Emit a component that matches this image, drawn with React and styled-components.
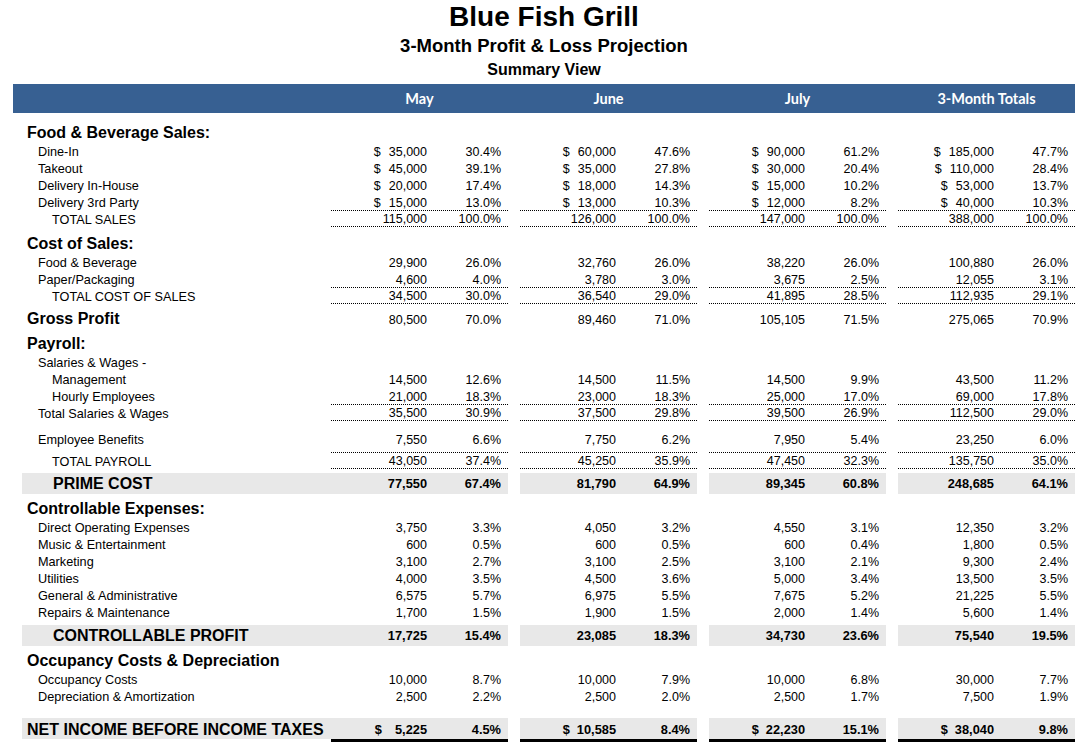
import React from "react";
import styled, { createGlobalStyle, css } from "styled-components";

const GlobalStyle = createGlobalStyle`
  html, body {
    margin: 0;
    padding: 0;
    background: #fff;
  }
  body {
    font-family: "Liberation Sans", Arial, sans-serif;
    color: #000;
  }
`;

const BAND = "#e8e8e8";

const Page = styled.div`
  width: 1062px;
  margin-left: 13px;
`;

const Title = styled.h1`
  margin: 0;
  padding-top: 1px;
  font-size: 28px;
  line-height: 32px;
  font-weight: 700;
  text-align: center;
`;

const Subtitle = styled.h2`
  margin: 2px 0 0;
  font-size: 18.5px;
  line-height: 22px;
  font-weight: 700;
  text-align: center;
`;

const ViewName = styled.div`
  margin-top: 3px;
  font-size: 16px;
  line-height: 19px;
  font-weight: 700;
  text-align: center;
`;

const HeaderBar = styled.div`
  margin-top: 5px;
  height: 29px;
  display: flex;
  align-items: center;
  padding-left: 9px;
  background: #376092;
  color: #fff;
  font-family: Lato, "Liberation Sans", sans-serif;
  font-weight: 700;
  font-size: 14.5px;
`;

const HeaderSpacer = styled.div`
  width: 309px;
  flex: none;
`;

const HeaderCell = styled.div`
  width: 177px;
  flex: none;
  margin-left: ${(p) => (p.$first ? 0 : 12)}px;
  text-align: center;
`;

const Row = styled.div`
  display: flex;
  align-items: flex-start;
  padding-left: 9px;
  margin-top: ${(p) => p.$mt || 0}px;
`;

const bold = (k) => k === "head" || k === "band" || k === "net";
const banded = (k) => k === "band" || k === "net";

const Label = styled.div`
  width: 309px;
  flex: none;
  box-sizing: border-box;
  height: ${(p) => p.$h}px;
  display: flex;
  align-items: flex-end;
  white-space: nowrap;
  padding-left: ${(p) => p.$indent}px;
  background: ${(p) => (banded(p.$kind) ? BAND : "transparent")};
  ${(p) =>
    bold(p.$kind)
      ? css`
          font-size: 16px;
          line-height: 18px;
          font-weight: 700;
          padding-bottom: ${p.$kind === "band" ? 1 : p.$kind === "net" ? 0.5 : 0}px;
        `
      : css`
          font-size: 12.7px;
          line-height: 14px;
          padding-bottom: 0.5px;
        `}
`;

const Group = styled.div`
  width: 177px;
  flex: none;
  box-sizing: border-box;
  height: ${(p) => (p.$kind === "net" ? p.$h + 3 : p.$h)}px;
  margin-left: ${(p) => (p.$first ? 0 : 12)}px;
  padding-right: 7px;
  display: flex;
  align-items: flex-end;
  font-size: ${(p) => (banded(p.$kind) ? 12.8 : 12.5)}px;
  line-height: 14px;
  font-weight: ${(p) => (banded(p.$kind) ? 700 : 400)};
  background: ${(p) => (banded(p.$kind) ? BAND : "transparent")};
  padding-bottom: ${(p) =>
    p.$kind === "band" ? 3 : p.$kind === "net" ? 2 : p.$kind === "head" ? 1.5 : 0.5}px;
  ${(p) =>
    p.$kind === "total" &&
    css`
      border-top: 1px dotted #000;
      border-bottom: 1px dotted #000;
    `}
  ${(p) =>
    p.$kind === "net" &&
    css`
      border-bottom: 3px solid #000;
    `}
`;

const Amount = styled.div`
  width: 96px;
  flex: none;
  text-align: right;
  white-space: nowrap;
`;

const Pct = styled.div`
  width: 74px;
  flex: none;
  text-align: right;
`;

const Dollar = styled.span`
  margin-right: ${(p) => p.$gap}px;
`;

const months = ["May", "June", "July", "3-Month Totals"];

const rows = [
  { kind: "head", label: "Food & Beverage Sales:", h: 29 },
  { kind: "item", label: "Dine-In", cells: [["$ 35,000", "30.4%"], ["$ 60,000", "47.6%"], ["$ 90,000", "61.2%"], ["$ 185,000", "47.7%"]] },
  { kind: "item", label: "Takeout", cells: [["$ 45,000", "39.1%"], ["$ 35,000", "27.8%"], ["$ 30,000", "20.4%"], ["$ 110,000", "28.4%"]] },
  { kind: "item", label: "Delivery In-House", cells: [["$ 20,000", "17.4%"], ["$ 18,000", "14.3%"], ["$ 15,000", "10.2%"], ["$ 53,000", "13.7%"]] },
  { kind: "item", label: "Delivery 3rd Party", cells: [["$ 15,000", "13.0%"], ["$ 13,000", "10.3%"], ["$ 12,000", "8.2%"], ["$ 40,000", "10.3%"]] },
  { kind: "total", indent: 2, label: "TOTAL SALES", cells: [["115,000", "100.0%"], ["126,000", "100.0%"], ["147,000", "100.0%"], ["388,000", "100.0%"]] },

  { kind: "head", label: "Cost of Sales:", h: 26 },
  { kind: "item", label: "Food & Beverage", cells: [["29,900", "26.0%"], ["32,760", "26.0%"], ["38,220", "26.0%"], ["100,880", "26.0%"]] },
  { kind: "item", label: "Paper/Packaging", cells: [["4,600", "4.0%"], ["3,780", "3.0%"], ["3,675", "2.5%"], ["12,055", "3.1%"]] },
  { kind: "total", indent: 2, label: "TOTAL COST OF SALES", cells: [["34,500", "30.0%"], ["36,540", "29.0%"], ["41,895", "28.5%"], ["112,935", "29.1%"]] },
  { kind: "head", label: "Gross Profit", h: 24, cells: [["80,500", "70.0%"], ["89,460", "71.0%"], ["105,105", "71.5%"], ["275,065", "70.9%"]] },

  { kind: "head", label: "Payroll:", h: 25 },
  { kind: "item", label: "Salaries & Wages -" },
  { kind: "item", indent: 2, label: "Management", cells: [["14,500", "12.6%"], ["14,500", "11.5%"], ["14,500", "9.9%"], ["43,500", "11.2%"]] },
  { kind: "item", indent: 2, label: "Hourly Employees", cells: [["21,000", "18.3%"], ["23,000", "18.3%"], ["25,000", "17.0%"], ["69,000", "17.8%"]] },
  { kind: "total", label: "Total Salaries & Wages", cells: [["35,500", "30.9%"], ["37,500", "29.8%"], ["39,500", "26.9%"], ["112,500", "29.0%"]] },
  { kind: "item", mt: 9, label: "Employee Benefits", cells: [["7,550", "6.6%"], ["7,750", "6.2%"], ["7,950", "5.4%"], ["23,250", "6.0%"]] },
  { kind: "total", mt: 5, indent: 2, label: "TOTAL PAYROLL", cells: [["43,050", "37.4%"], ["45,250", "35.9%"], ["47,450", "32.3%"], ["135,750", "35.0%"]] },
  { kind: "band", mt: 4, label: "PRIME COST", cells: [["77,550", "67.4%"], ["81,790", "64.9%"], ["89,345", "60.8%"], ["248,685", "64.1%"]] },

  { kind: "head", label: "Controllable Expenses:", h: 24 },
  { kind: "item", label: "Direct Operating Expenses", cells: [["3,750", "3.3%"], ["4,050", "3.2%"], ["4,550", "3.1%"], ["12,350", "3.2%"]] },
  { kind: "item", label: "Music & Entertainment", cells: [["600", "0.5%"], ["600", "0.5%"], ["600", "0.4%"], ["1,800", "0.5%"]] },
  { kind: "item", label: "Marketing", cells: [["3,100", "2.7%"], ["3,100", "2.5%"], ["3,100", "2.1%"], ["9,300", "2.4%"]] },
  { kind: "item", label: "Utilities", cells: [["4,000", "3.5%"], ["4,500", "3.6%"], ["5,000", "3.4%"], ["13,500", "3.5%"]] },
  { kind: "item", label: "General & Administrative", cells: [["6,575", "5.7%"], ["6,975", "5.5%"], ["7,675", "5.2%"], ["21,225", "5.5%"]] },
  { kind: "item", label: "Repairs & Maintenance", cells: [["1,700", "1.5%"], ["1,900", "1.5%"], ["2,000", "1.4%"], ["5,600", "1.4%"]] },
  { kind: "band", mt: 5, label: "CONTROLLABLE PROFIT", cells: [["17,725", "15.4%"], ["23,085", "18.3%"], ["34,730", "23.6%"], ["75,540", "19.5%"]] },

  { kind: "head", label: "Occupancy Costs & Depreciation", h: 24 },
  { kind: "item", label: "Occupancy Costs", cells: [["10,000", "8.7%"], ["10,000", "7.9%"], ["10,000", "6.8%"], ["30,000", "7.7%"]] },
  { kind: "item", label: "Depreciation & Amortization", cells: [["2,500", "2.2%"], ["2,500", "2.0%"], ["2,500", "1.7%"], ["7,500", "1.9%"]] },
  { kind: "net", mt: 14, label: "NET INCOME BEFORE INCOME TAXES", cells: [["$  5,225", "4.5%"], ["$ 10,585", "8.4%"], ["$ 22,230", "15.1%"], ["$ 38,040", "9.8%"]] },
];

function indentFor(kind, indent) {
  if (kind === "head" || kind === "net") return 5;
  if (kind === "band") return 31;
  return indent === 2 ? 30 : 16;
}

function Money({ value, kind }) {
  const m = value.match(/^\$(\s+)(.*)$/);
  if (!m) return value;
  const base = kind === "net" ? 7 : 8;
  return (
    <>
      <Dollar $gap={base + (m[1].length - 1) * 6}>$</Dollar>
      {m[2]}
    </>
  );
}

function LineRow({ row }) {
  const { kind, label, cells, indent = 1, mt } = row;
  const h = row.h || (banded(kind) ? 21 : 17);

  return (
    <Row $mt={mt}>
      <Label $kind={kind} $indent={indentFor(kind, indent)} $h={h}>
        {label}
      </Label>
      {months.map((m, i) => (
        <Group key={m} $first={i === 0} $kind={kind} $h={h}>
          {cells && (
            <>
              <Amount>
                <Money value={cells[i][0]} kind={kind} />
              </Amount>
              <Pct>{cells[i][1]}</Pct>
            </>
          )}
        </Group>
      ))}
    </Row>
  );
}

export default function App() {
  return (
    <>
      <GlobalStyle />
      <Page>
        <Title>Blue Fish Grill</Title>
        <Subtitle>3-Month Profit &amp; Loss Projection</Subtitle>
        <ViewName>Summary View</ViewName>
        <HeaderBar>
          <HeaderSpacer />
          {months.map((m, i) => (
            <HeaderCell key={m} $first={i === 0}>
              {m}
            </HeaderCell>
          ))}
        </HeaderBar>
        {rows.map((row, i) => (
          <LineRow key={i} row={row} />
        ))}
      </Page>
    </>
  );
}
